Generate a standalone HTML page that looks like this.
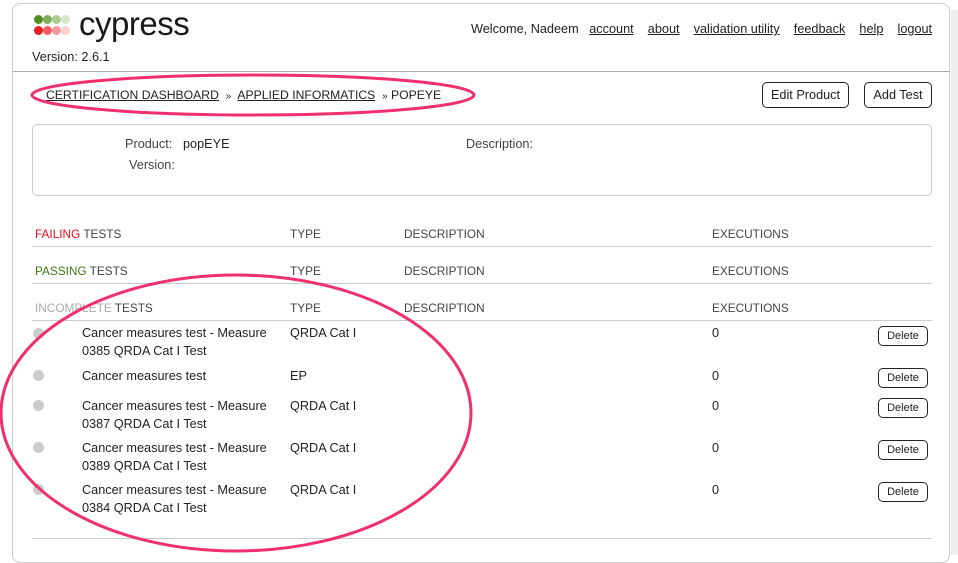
<!DOCTYPE html>
<html><head><style>
body{margin:0;width:958px;height:555px;background:#fff;font-family:"Liberation Sans",sans-serif;font-size:12.7px;color:#222;position:relative;overflow:hidden}
.a{position:absolute;white-space:nowrap}
u{text-decoration:underline}
.btn{position:absolute;border:1px solid #222;border-radius:5px;background:#fff;text-align:center;box-sizing:border-box}
.hr{position:absolute;height:1px;background:#ccc}
.dot{position:absolute;width:11px;height:11px;border-radius:50%;background:#ccc}
.d{position:absolute;width:9px;height:9px;border-radius:50%}
</style></head><body>
<div style="position:absolute;left:12px;top:3px;width:938px;height:560px;border:1px solid #ccc;border-radius:8px;box-sizing:border-box"></div>
<div style="position:absolute;left:951px;top:10px;width:7px;height:545px;background:#eee"></div>
<div class="d" style="left:34px;top:15px;background:#4f8c1e"></div>
<div class="d" style="left:43px;top:15px;background:#80ad5b"></div>
<div class="d" style="left:52px;top:15px;background:#aacb8e"></div>
<div class="d" style="left:61px;top:15px;background:#d8e6cc"></div>
<div class="d" style="left:34px;top:26px;background:#ea1c22"></div>
<div class="d" style="left:43px;top:26px;background:#f15c5e"></div>
<div class="d" style="left:52px;top:26px;background:#f49a9c"></div>
<div class="d" style="left:61px;top:26px;background:#f9cfd0"></div>
<div class="a" style="left:79px;top:5px;font-size:33px;color:#1a1a1a;letter-spacing:-0.5px">cypress</div>
<div class="a" style="left:32px;top:50px">Version: 2.6.1</div>
<div class="a" style="left:471px;top:22px">Welcome, Nadeem &nbsp;&nbsp;<u>account</u>&nbsp;&nbsp;&nbsp; <u>about</u>&nbsp;&nbsp;&nbsp; <u>validation utility</u>&nbsp;&nbsp;&nbsp; <u>feedback</u>&nbsp;&nbsp;&nbsp; <u>help</u>&nbsp;&nbsp;&nbsp; <u>logout</u></div>
<div class="hr" style="left:13px;top:71px;width:937px;background:#aaa"></div>
<div class="a" style="left:46px;top:88px;font-size:12.2px"><u>CERTIFICATION DASHBOARD</u> &nbsp;<span style="font-size:10px">»</span>&nbsp; <u>APPLIED INFORMATICS</u> &nbsp;<span style="font-size:10px">»</span> POPEYE</div>
<div class="btn" style="left:762px;top:82px;width:87px;height:26px;line-height:24px">Edit Product</div>
<div class="btn" style="left:864px;top:82px;width:68px;height:26px;line-height:24px">Add Test</div>
<div style="position:absolute;left:32px;top:124px;width:900px;height:72px;border:1px solid #ccc;border-radius:5px;box-sizing:border-box"></div>
<div class="a" style="left:125px;top:137px;color:#444">Product:</div>
<div class="a" style="left:183px;top:137px">popEYE</div>
<div class="a" style="left:129px;top:158px;color:#444">Version:</div>
<div class="a" style="left:466px;top:137px;color:#444">Description:</div>
<div style="font-size:11.8px;color:#444">
<div class="a" style="left:35px;top:227px"><span style="color:#e8101a">FAILING</span> TESTS</div>
<div class="a" style="left:35px;top:264px"><span style="color:#3a7a10">PASSING</span> TESTS</div>
<div class="a" style="left:35px;top:301px"><span style="color:#aaa">INCOMPLETE</span> TESTS</div>
<div class="a" style="left:290px;top:227px">TYPE</div><div class="a" style="left:290px;top:264px">TYPE</div><div class="a" style="left:290px;top:301px">TYPE</div>
<div class="a" style="left:404px;top:227px">DESCRIPTION</div><div class="a" style="left:404px;top:264px">DESCRIPTION</div><div class="a" style="left:404px;top:301px">DESCRIPTION</div>
<div class="a" style="left:712px;top:227px">EXECUTIONS</div><div class="a" style="left:712px;top:264px">EXECUTIONS</div><div class="a" style="left:712px;top:301px">EXECUTIONS</div>
</div>
<div class="hr" style="left:32px;top:246px;width:900px"></div>
<div class="hr" style="left:32px;top:283px;width:900px"></div>
<div class="hr" style="left:32px;top:320px;width:900px"></div>
<div class="hr" style="left:32px;top:538px;width:900px"></div>
<div style="line-height:18px">
<div class="dot" style="left:33px;top:328px"></div><div class="a" style="left:82px;top:324px">Cancer measures test - Measure<br>0385 QRDA Cat I Test</div><div class="a" style="left:290px;top:324px">QRDA Cat I</div><div class="a" style="left:712px;top:324px">0</div>
<div class="dot" style="left:33px;top:370px"></div><div class="a" style="left:82px;top:367px">Cancer measures test</div><div class="a" style="left:290px;top:367px">EP</div><div class="a" style="left:712px;top:367px">0</div>
<div class="dot" style="left:33px;top:400px"></div><div class="a" style="left:82px;top:397px">Cancer measures test - Measure<br>0387 QRDA Cat I Test</div><div class="a" style="left:290px;top:397px">QRDA Cat I</div><div class="a" style="left:712px;top:397px">0</div>
<div class="dot" style="left:33px;top:442px"></div><div class="a" style="left:82px;top:439px">Cancer measures test - Measure<br>0389 QRDA Cat I Test</div><div class="a" style="left:290px;top:439px">QRDA Cat I</div><div class="a" style="left:712px;top:439px">0</div>
<div class="dot" style="left:33px;top:484px"></div><div class="a" style="left:82px;top:481px">Cancer measures test - Measure<br>0384 QRDA Cat I Test</div><div class="a" style="left:290px;top:481px">QRDA Cat I</div><div class="a" style="left:712px;top:481px">0</div>
</div>
<div style="font-size:11px">
<div class="btn" style="left:878px;top:326px;width:50px;height:20px;line-height:18px">Delete</div>
<div class="btn" style="left:878px;top:368px;width:50px;height:20px;line-height:18px">Delete</div>
<div class="btn" style="left:878px;top:398px;width:50px;height:20px;line-height:18px">Delete</div>
<div class="btn" style="left:878px;top:440px;width:50px;height:20px;line-height:18px">Delete</div>
<div class="btn" style="left:878px;top:482px;width:50px;height:20px;line-height:18px">Delete</div>
</div>
<svg width="958" height="555" style="position:absolute;left:0;top:0" fill="none" stroke="#f0306c" stroke-width="3">
<ellipse cx="253" cy="95" rx="221" ry="20"/>
<ellipse cx="236" cy="413" rx="235" ry="138"/>
</svg>
</body></html>
